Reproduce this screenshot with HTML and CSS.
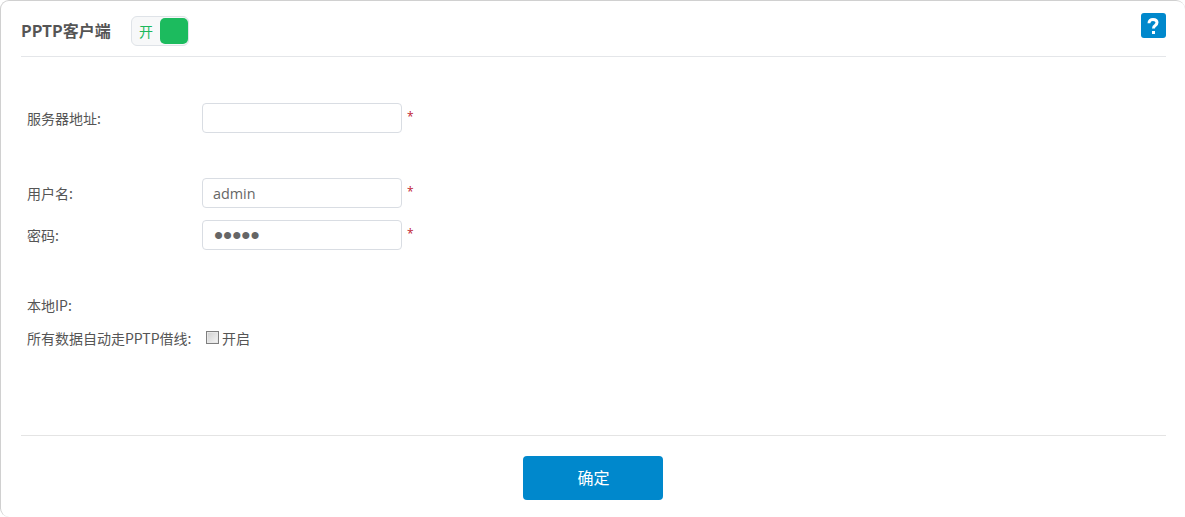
FILE: index.html
```html
<!DOCTYPE html>
<html lang="zh-CN">
<head>
<meta charset="utf-8">
<title>PPTP客户端</title>
<link rel="stylesheet" href="styles.css">
</head>
<body>
<main class="panel">
  <header class="head">
    <h1 class="title">PPTP客户端</h1>
    <div class="switch"><span class="switch-text">开</span><span class="switch-knob"></span></div>
    <span class="help" aria-label="帮助"><svg width="25" height="25" viewBox="0 0 25 25"><rect width="25" height="25" rx="3" fill="#0088cc"/><path d="M8 10.2C8 7.6 9.7 6.4 12 6.4c2.4 0 4 1.3 4 3.2 0 1.5-.8 2.2-1.8 2.9-1.2.8-1.7 1.4-1.7 2.9" fill="none" stroke="#fff" stroke-width="3"/><rect x="11" y="18" width="3" height="3" fill="#fff"/></svg></span>
  </header>
  <form class="form">
    <div class="row row-server">
      <label class="label">服务器地址:</label>
      <input class="input" type="text">
      <span class="req">*</span>
    </div>
    <div class="row row-user">
      <label class="label">用户名:</label>
      <input class="input" type="text" value="admin">
      <span class="req">*</span>
    </div>
    <div class="row row-pass">
      <label class="label">密码:</label>
      <input class="input input-pass" type="password" value="admin">
      <span class="req">*</span>
    </div>
    <div class="row row-ip">
      <label class="label">本地IP:</label>
    </div>
    <div class="row row-check">
      <label class="label">所有数据自动走PPTP借线:</label>
      <span class="check"></span><span class="check-text">开启</span>
    </div>
  </form>
  <footer class="foot">
    <button class="ok" type="button">确定</button>
  </footer>
</main>
</body>
</html>
```
FILE: styles.css
```css
* { box-sizing: border-box; }
html, body { margin: 0; height: 100%; background: #fff; overflow: hidden; }
body { font-family: "Noto Sans CJK SC", "Open Sans", sans-serif; color: #555; font-size: 14px; }
.panel {
  width: 1185px; height: 517px; padding: 0 19px 0 20px;
  border: 1px solid #d0d0d0; border-bottom: 0; border-right: 0;
  border-radius: 9px;
  display: flex; flex-direction: column;
}
.head {
  height: 56px; border-bottom: 1px solid #e4e6e9;
  display: flex; align-items: flex-start;
}
.title { margin: 18px 0 0; font-size: 16px; line-height: 22px; font-weight: 700; color: #555; font-family: "Noto Sans CJK SC", sans-serif; width: 90px; white-space: nowrap; }
.switch {
  margin: 15px 0 0 20px; width: 58px; height: 30px; padding: 1px 0 1px 1px;
  border: 1px solid #dfe3e8; border-radius: 6px; background: #f7f8f9;
  display: flex; justify-content: space-between; align-items: stretch;
}
.switch-text { color: #1cb85c; font-size: 14px; line-height: 26px; padding-left: 6px; }
.switch-knob { width: 28px; background: #1cbb5e; border-radius: 5px; }
.help { margin: 12px 0 0 auto; height: 25px; }
.help svg { display: block; }
.form { padding: 46px 0 0 6px; flex: 1; }
.row { display: flex; align-items: center; height: 30px; }
.row-user { margin-top: 45px; }
.row-pass { margin-top: 12px; }
.row-ip { margin-top: 40px; }
.row-check { margin-top: 3px; }
.label { width: 175px; flex: none; white-space: nowrap; font-size: 14px; line-height: 20px; color: #555; }
.input {
  width: 200px; height: 30px; padding: 0 10px; flex: none;
  border: 1px solid #d9dde3; border-radius: 4px; outline: 0; background: #fff;
  font-family: "Open Sans", sans-serif; font-size: 14.4px; color: #666;
}
.input-pass { font-family: "Liberation Sans", sans-serif; font-size: 26px; padding: 0 10px 0 11px; }
.req { margin: -3px 0 0 5px; color: #c0202f; font-size: 12px; font-family: "Open Sans", sans-serif; }
.check {
  width: 13px; height: 13px; margin: -2px 3px 0 4px; flex: none;
  border: 1px solid #7f7f7f; background: linear-gradient(135deg, #cfcfcf, #f6f6f6);
  box-shadow: inset 0 0 0 1px #e8e8e8;
}
.check-text { font-size: 14px; line-height: 20px; color: #555; }
.foot {
  height: 82px; flex: none; border-top: 1px solid #e4e4e4;
  display: flex; justify-content: center; padding-top: 20px;
}
.ok {
  width: 140px; height: 44px; border: 0; border-radius: 4px; background: #0088cc; color: #fff;
  font-family: "Noto Sans CJK SC", sans-serif; font-size: 16px; line-height: 40px; padding: 0 0 2px 2px; margin: 0 2px 0 0;
}
```
